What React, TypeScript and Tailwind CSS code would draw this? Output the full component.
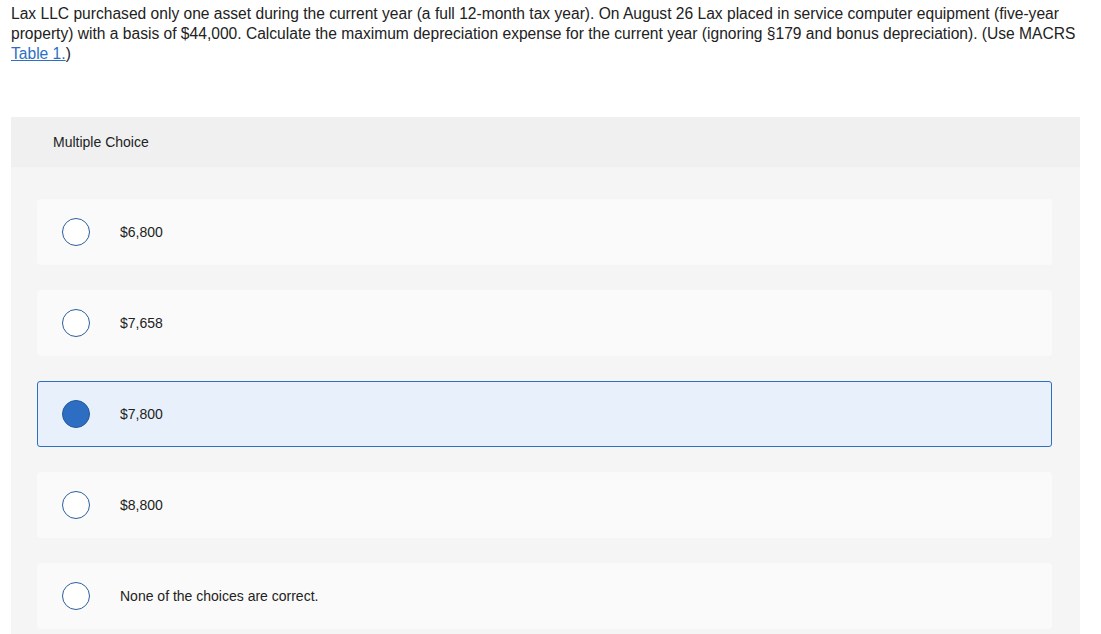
const choices = ['$6,800', '$7,658', '$7,800', '$8,800', 'None of the choices are correct.']

function Radio({ checked }: { checked: boolean }) {
  return checked ? (
    <span className="block w-[28px] h-[28px] rounded-full bg-[#2d6ec2] border border-[#24589b]" />
  ) : (
    <span className="block w-[28px] h-[28px] rounded-full bg-white border-[1.5px] border-[#2b5f9e]" />
  )
}

export default function App() {
  const selected = 2
  return (
    <div className="bg-white min-h-[634px] text-[#222] font-['Liberation_Sans',Arial,sans-serif]">
      <div className="px-[11px] pt-[4px]">
        <p className="text-[15.6px] leading-[20px] whitespace-nowrap">
          Lax LLC purchased only one asset during the current year (a full 12-month tax year). On August 26 Lax placed in service computer equipment (five-year
          <br />
          property) with a basis of $44,000. Calculate the maximum depreciation expense for the current year (ignoring §179 and bonus depreciation). (Use MACRS
          <br />
          <a href="#" className="text-[#2e6fc4] underline">Table 1.</a>)
        </p>
      </div>
      <div className="mx-[11px] mt-[53px] w-[1069px] bg-[#f5f5f5]">
        <div className="h-[50px] bg-[#f0f0f0] flex items-center pl-[42px] text-[14px] text-[#222]">
          Multiple Choice
        </div>
        <div className="flex flex-col gap-[25px] pt-[32px] pb-[5px] pl-[26px] pr-[28px]">
          {choices.map((c, i) => (
            <div
              key={c}
              className={`h-[66px] flex items-center rounded-[3px] ${
                i === selected ? 'bg-[#e8f1fb] border border-[#2e6fc4]' : 'bg-[#fafafa] border border-[#fafafa]'
              }`}
            >
              <div className="pl-[24px] w-[82px]">
                <Radio checked={i === selected} />
              </div>
              <span className="text-[14px] text-[#222]">{c}</span>
            </div>
          ))}
        </div>
      </div>
    </div>
  )
}
